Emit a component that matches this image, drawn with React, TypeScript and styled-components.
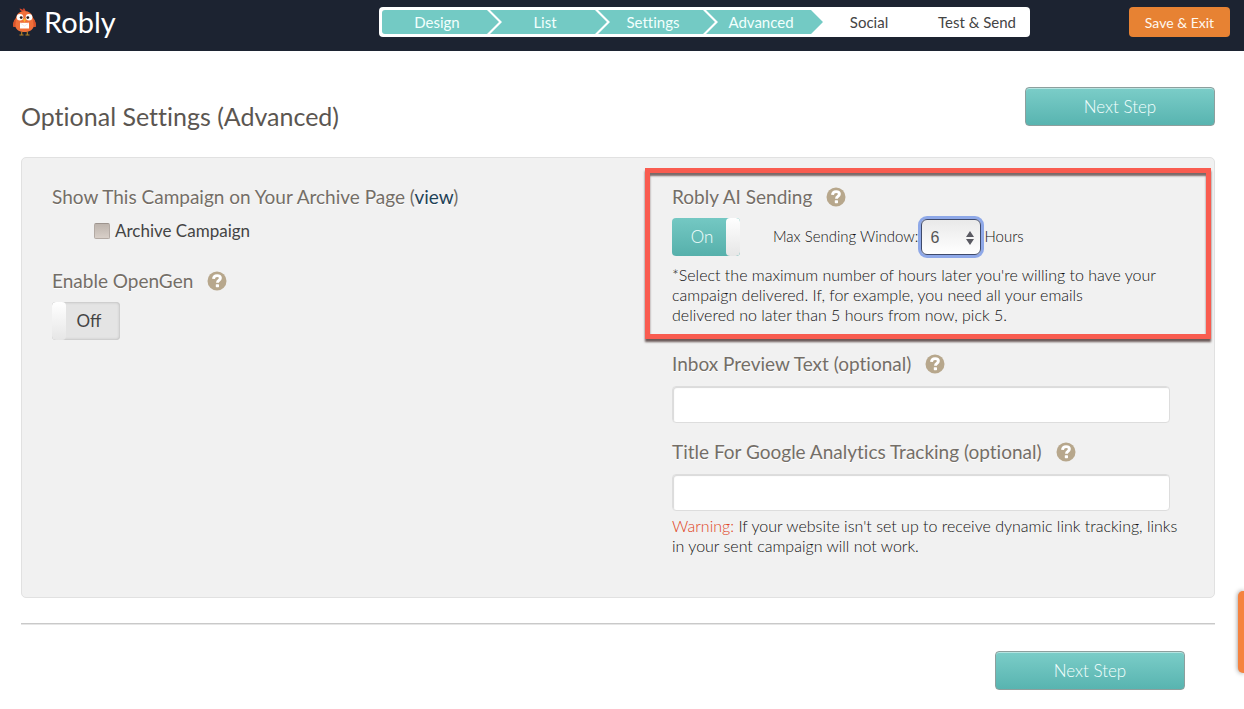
import React, { useState } from 'react';
import styled, { createGlobalStyle, css } from 'styled-components';

const teal = '#73cac4';
const sans = 'Lato, "Open Sans", "Liberation Sans", sans-serif';

const GlobalStyle = createGlobalStyle`
  *, *::before, *::after { box-sizing: border-box; }
  body {
    margin: 0;
    background: #fff;
    color: #333;
    font-family: ${sans};
    font-variant-ligatures: none;
    overflow-x: hidden;
  }
  button, input, select { font-family: inherit; margin: 0; }
  button { cursor: pointer; }
`;

const TopBar = styled.header`
  display: flex;
  align-items: flex-start;
  height: 51px;
  padding: 7px 14px 0 12px;
  background: #1c2331;
`;

const Brand = styled.a`
  display: flex;
  align-items: center;
  gap: 7px;
  height: 30px;
  color: #fff;
  font-size: 29px;
  line-height: 30px;
  text-decoration: none;
`;

const Mascot = styled.svg`
  display: block;
  width: 25px;
  height: 28px;
`;

const Steps = styled.nav`
  display: flex;
  flex: none;
  height: 30px;
  margin-left: auto;
  margin-right: 99px;
  padding: 3px;
  background: #fff;
  border-radius: 4px;
`;

const Step = styled.a<{ $state: 'first' | 'done' | 'todo' }>`
  width: 117px;
  height: 24px;
  padding-right: 7px;
  font-size: 15px;
  line-height: 24px;
  text-align: center;
  text-decoration: none;
  color: ${p => (p.$state === 'todo' ? '#444' : '#f2fffd')};

  & + & { margin-left: -9px; }
  &:last-child { width: 105px; padding: 0 0 0 5px; }

  ${p => p.$state === 'first' && css`
    background: ${teal};
    border-radius: 3px 0 0 3px;
    clip-path: polygon(0 0, 105px 0, 100% 50%, 105px 100%, 0 100%);
  `}
  ${p => p.$state === 'done' && css`
    background: ${teal};
    clip-path: polygon(0 0, 105px 0, 100% 50%, 105px 100%, 0 100%, 12px 50%);
  `}
`;

const SaveButton = styled.button`
  width: 101px;
  height: 30px;
  padding: 0;
  border: 0;
  border-radius: 4px;
  background: #e78233;
  color: #fff8f0;
  font-size: 14px;
`;

const Page = styled.main`
  padding: 36px 29px 19px 21px;
`;

const TitleRow = styled.div`
  display: flex;
  justify-content: space-between;
  align-items: flex-start;
  height: 70px;
`;

const Title = styled.h1`
  margin: 14px 0 0;
  color: #5b5651;
  font-size: 25px;
  font-weight: 400;
  line-height: 30px;
`;

const NextButton = styled.button`
  width: 190px;
  height: 39px;
  padding: 0;
  border: 1px solid #8d9f9d;
  border-radius: 4px;
  background: linear-gradient(#7bcdc8, #58b4b0);
  box-shadow: inset 0 1px 0 #b5e4e1;
  color: #f4fffe;
  font-size: 17px;
  font-weight: 300;
`;

const Panel = styled.section`
  display: grid;
  grid-template-columns: 623fr 566fr;
  align-items: start;
  padding: 10px 3px 41px 0;
  border: 1px solid #e1e1e1;
  border-radius: 5px;
  background: #f1f1f1;
`;

const LeftColumn = styled.div`
  padding: 17px 30px 0;
`;

const HeadingRow = styled.div`
  display: flex;
  align-items: center;
  gap: 14px;
  height: 24px;
`;

const Heading = styled.h2`
  margin: 0;
  color: #746e67;
  font-size: 19px;
  font-weight: 400;
  line-height: 24px;
  text-shadow: 0 1px 0 #fff;

  a { color: #1f4257; text-decoration: none; }
`;

const HelpButton = styled.button`
  flex: none;
  width: 20px;
  height: 20px;
  padding: 0;
  border: 0;
  background: none;

  svg { display: block; }
`;

const CheckRow = styled.label`
  display: flex;
  align-items: center;
  gap: 5px;
  margin: 10px 0 26px 42px;
  color: #444;
  font-size: 17px;
  line-height: 24px;
`;

const CheckBox = styled.input`
  appearance: none;
  width: 16px;
  height: 16px;
  border: 1px solid #b3aaa4;
  border-top-color: #9d948e;
  border-radius: 2px;
  background: linear-gradient(#bdb4ad, #d8cfc8);

  &:checked { background: ${teal}; }
`;

const Switch = styled.button<{ $on: boolean }>`
  display: flex;
  flex-direction: ${p => (p.$on ? 'row' : 'row-reverse')};
  width: 68px;
  height: 38px;
  padding: 0;
  border: 0;
  border-radius: 4px;
  overflow: hidden;
  font-size: 17px;
  font-weight: ${p => (p.$on ? 300 : 400)};
  line-height: 38px;
  background: ${p => (p.$on ? 'linear-gradient(#74c8c3, #56b0ab)' : '#e4e4e4')};
  color: ${p => (p.$on ? '#f4fffe' : '#444')};
  box-shadow: ${p => (p.$on ? 'none' : 'inset 0 0 3px #aaa')};
`;

const SwitchText = styled.span<{ $on: boolean }>`
  flex: 1;
  padding-left: ${p => (p.$on ? '6px' : '0')};
  padding-right: ${p => (p.$on ? '0' : '8px')};
`;

const Knob = styled.span`
  width: 14px;
  height: 38px;
  border-radius: 4px;
  background: linear-gradient(#fff, #e6e6e6);
`;

const SwitchGap = styled.div`
  margin-top: 9px;
`;

const Highlight = styled.section`
  padding: 12px 22px 9px;
  border: 5px solid #f95c50;
  box-shadow: 0 3px 2px #6b5a59, inset 0 3px 2px #7a6968;
`;

const SendingRow = styled.div`
  display: flex;
  align-items: center;
  height: 38px;
  margin: 9px 0;
  font-size: 15px;
  font-weight: 300;
  color: #111;
`;

const WindowLabel = styled.label`
  margin: 0 3px 2px 33px;
  white-space: nowrap;
`;

const Unit = styled.span`
  margin: 0 0 2px 3px;
`;

const SelectBox = styled.div`
  position: relative;
  width: 60px;
  height: 36px;

  svg {
    position: absolute;
    top: 12px;
    right: 7px;
    pointer-events: none;
  }
`;

const HourSelect = styled.select`
  appearance: none;
  width: 60px;
  height: 36px;
  padding: 0 0 0 8px;
  border: 1px solid #3f4a6b;
  border-radius: 6px;
  outline: 0;
  background: linear-gradient(#e9e9e9, #f4f4f4 50%, #fff);
  box-shadow: 0 0 0 3px #8ea8e8;
  color: #555;
  font-family: "Liberation Sans", sans-serif;
  font-size: 16px;
`;

const Note = styled.p`
  margin: 0;
  color: #111;
  font-size: 16px;
  font-weight: 300;
  line-height: 20px;
`;

const Warning = styled.span`
  color: #e0431c;
`;

const Field = styled.div`
  padding: 0 27px;
  margin-top: 17px;

  &:first-of-type { margin-top: 13px; }
`;

const TextInput = styled.input`
  display: block;
  width: calc(100% - 14px);
  height: 37px;
  margin: 10px 0 5px;
  padding: 0 10px;
  border: 1px solid #ddd;
  border-radius: 4px;
  outline: 0;
  background: #fff;
  box-shadow: inset 1px 1px 1px #d9d9d9;
  font-size: 16px;
`;

const Divider = styled.hr`
  height: 2px;
  margin: 25px 0 0;
  border: 0;
  border-top: 1px solid #c9c9c9;
  border-bottom: 1px solid #e6e6e6;
`;

const FooterRow = styled.div`
  display: flex;
  justify-content: flex-end;
  padding: 26px 30px 0 0;
`;

const SideTab = styled.button`
  position: fixed;
  right: 0;
  top: 591px;
  width: 6px;
  height: 82px;
  padding: 0;
  border: 0;
  border-radius: 5px 0 0 5px;
  background: #f5833f;
  box-shadow: 0 0 5px #888;
`;

function Help({ topic }: { topic: string }) {
  return (
    <HelpButton type="button" aria-label={`Help: ${topic}`}>
      <svg width="20" height="20" viewBox="0 0 20 20">
        <circle cx="10" cy="10" r="9.5" fill="#b7a78c" />
        <path d="M6.5 7.900C6.600 5.600 8.100 4.600 10.100 4.600c2 0 3.300 1 3.300 2.500 0 1.300-.8 1.800-1.700 2.400-.8.5-1.200.9-1.200 2.200" fill="none" stroke="#fff" strokeWidth="2.900" />
        <rect x="8.800" y="13.200" width="3.200" height="3" rx=".6" fill="#fff" />
      </svg>
    </HelpButton>
  );
}

function Toggle({ label, initial }: { label: string; initial: boolean }) {
  const [on, setOn] = useState(initial);
  return (
    <Switch type="button" role="switch" aria-checked={on} aria-label={label} $on={on} onClick={() => setOn(!on)}>
      <SwitchText $on={on}>{on ? 'On' : 'Off'}</SwitchText>
      <Knob />
    </Switch>
  );
}

function RobinLogo() {
  return (
    <Mascot viewBox="0 0 25 28" aria-hidden="true">
      <path d="M11 4C9 3 7.600 1.600 7.600.4c1.500.4 2.500.8 3.400 1.500.1-.8.400-1.400.9-1.900.7 1 1.500 2 1.900 3.600z" fill="#d9482c" />
      <path d="M12.500 3c4.800 0 7.700 2.900 8.700 7.200 1.800 2 3 5.200 2.500 8.600-.8.2-1.500.1-2.100-.1-1.200 3.300-4.500 5.300-9.100 5.300s-7.900-2-9.100-5.300c-.6.2-1.300.3-2.100.1-.5-3.400.7-6.600 2.500-8.600C4.800 5.900 7.700 3 12.500 3z" fill="#f0703a" />
      <path d="M1.300 18.800c-.5-3.400.7-6.600 2.500-8.600.2 3-.4 5.500-.4 8.500-.6.2-1.300.3-2.100.1zM23.700 18.800c.5-3.400-.7-6.600-2.500-8.600-.2 3 .4 5.500.4 8.500.6.2 1.300.3 2.100.1z" fill="#d9532b" />
      <circle cx="8" cy="9.300" r="3.300" fill="#fff" />
      <circle cx="17" cy="9.300" r="3.300" fill="#fff" />
      <circle cx="9.200" cy="9.600" r="1.400" fill="#2b1a16" />
      <circle cx="15.800" cy="9.600" r="1.400" fill="#2b1a16" />
      <path d="M10.900 11.200l1.600-1 1.600 1-1.600 3.400z" fill="#f8b62c" />
      <path d="M8 14.800h9v5.700H8z" fill="#fff" />
      <path d="M8 14.800l4.500 3.200 4.500-3.200" fill="none" stroke="#ecdcd6" strokeWidth=".6" />
      <path d="M9.700 23.800v2.900M15.300 23.800v2.900M7.500 27h4M13.500 27h4" stroke="#b98524" strokeWidth="1.100" />
    </Mascot>
  );
}

const steps: { name: string; state: 'first' | 'done' | 'todo' }[] = [
  { name: 'Design', state: 'first' },
  { name: 'List', state: 'done' },
  { name: 'Settings', state: 'done' },
  { name: 'Advanced', state: 'done' },
  { name: 'Social', state: 'todo' },
  { name: 'Test & Send', state: 'todo' },
];

export default function App() {
  return (
    <>
      <GlobalStyle />
      <TopBar>
        <Brand href="#home">
          <RobinLogo />
          Robly
        </Brand>
        <Steps aria-label="Campaign steps">
          {steps.map(s => (
            <Step key={s.name} href="#step" $state={s.state}>{s.name}</Step>
          ))}
        </Steps>
        <SaveButton type="button">Save &amp; Exit</SaveButton>
      </TopBar>

      <Page>
        <TitleRow>
          <Title>Optional Settings (Advanced)</Title>
          <NextButton type="button">Next Step</NextButton>
        </TitleRow>

        <Panel>
          <LeftColumn>
            <HeadingRow>
              <Heading>Show This Campaign on Your Archive Page (<a href="#archive">view</a>)</Heading>
            </HeadingRow>
            <CheckRow>
              <CheckBox type="checkbox" />
              Archive Campaign
            </CheckRow>
            <HeadingRow>
              <Heading>Enable OpenGen</Heading>
              <Help topic="OpenGen" />
            </HeadingRow>
            <SwitchGap>
              <Toggle label="Enable OpenGen" initial={false} />
            </SwitchGap>
          </LeftColumn>

          <div>
            <Highlight>
              <HeadingRow>
                <Heading>Robly AI Sending</Heading>
                <Help topic="Robly AI Sending" />
              </HeadingRow>
              <SendingRow>
                <Toggle label="Robly AI Sending" initial />
                <WindowLabel htmlFor="hours">Max Sending Window:</WindowLabel>
                <SelectBox>
                  <HourSelect id="hours" defaultValue="6">
                    {[1, 2, 3, 4, 5, 6, 7, 8, 9, 10, 11, 12].map(n => (
                      <option key={n} value={n}>{n}</option>
                    ))}
                  </HourSelect>
                  <svg width="8" height="14" viewBox="0 0 8 14" fill="#5a5a62" aria-hidden="true">
                    <path d="M4 0l4 6H0zM4 14l4-6H0z" />
                  </svg>
                </SelectBox>
                <Unit>Hours</Unit>
              </SendingRow>
              <Note>
                *Select the maximum number of hours later you're willing to have your
                campaign delivered. If, for example, you need all your emails
                <br />
                delivered no later than 5 hours from now, pick 5.
              </Note>
            </Highlight>

            <Field>
              <HeadingRow>
                <Heading as="label" htmlFor="preview">Inbox Preview Text (optional)</Heading>
                <Help topic="Inbox Preview Text" />
              </HeadingRow>
              <TextInput id="preview" type="text" />
            </Field>

            <Field>
              <HeadingRow>
                <Heading as="label" htmlFor="analytics">Title For Google Analytics Tracking (optional)</Heading>
                <Help topic="Google Analytics Tracking" />
              </HeadingRow>
              <TextInput id="analytics" type="text" />
              <Note>
                <Warning>Warning:</Warning> If your website isn't set up to receive dynamic link tracking, links
                in your sent campaign will not work.
              </Note>
            </Field>
          </div>
        </Panel>

        <Divider />
        <FooterRow>
          <NextButton type="button">Next Step</NextButton>
        </FooterRow>
      </Page>
      <SideTab type="button" aria-label="Open feedback" />
    </>
  );
}
